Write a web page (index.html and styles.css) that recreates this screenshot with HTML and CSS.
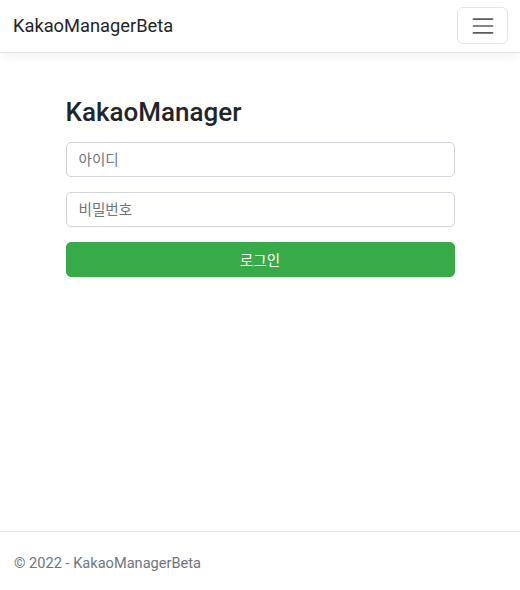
FILE: index.html
```html
<!DOCTYPE html>
<html lang="ko">
<head>
<meta charset="utf-8">
<title>KakaoManagerBeta</title>
<link rel="stylesheet" href="styles.css">
</head>
<body>
<header class="navbar">
  <div class="nav-inner">
    <a class="brand" href="#">KakaoManagerBeta</a>
    <button class="toggler" type="button" aria-label="Toggle navigation">
      <svg class="toggler-icon" viewBox="0 0 30 30" aria-hidden="true">
        <path d="M4 7h22M4 15h22M4 23h22" stroke="rgba(33,37,41,0.75)" stroke-width="2" stroke-linecap="round" stroke-miterlimit="10" fill="none"/>
      </svg>
    </button>
  </div>
</header>
<main class="main">
  <form class="login">
    <h2 class="title">KakaoManager</h2>
    <input class="field" type="text" placeholder="아이디">
    <input class="field" type="password" placeholder="비밀번호">
    <button class="btn-login" type="button">로그인</button>
  </form>
</main>
<footer class="footer">
  <div class="footer-inner">© 2022 - KakaoManagerBeta</div>
</footer>
</body>
</html>
```

FILE: styles.css
```css
* { box-sizing: border-box; }
html { font-size: 14px; }
body {
  margin: 0;
  min-height: 100vh;
  display: flex;
  flex-direction: column;
  font-family: Roboto, "Noto Sans CJK KR", "Liberation Sans", sans-serif;
  font-size: 14.6px;
  line-height: 1.5;
  color: #212529;
  background: #fff;
}
.navbar {
  border-bottom: 1px solid #dee2e6;
  box-shadow: 0 0.25rem 0.75rem rgba(0,0,0,0.05);
  padding: 7px 0 8px;
  background: #fff;
}
.nav-inner {
  display: flex;
  align-items: center;
  justify-content: space-between;
  padding: 0 12px 0 13px;
}
.brand {
  font-size: 18.3px;
  color: #212529;
  text-decoration: none;
  line-height: 1.5;
  padding: 4px 0;
}
.toggler {
  display: flex;
  align-items: center;
  justify-content: center;
  width: 51px;
  height: 37px;
  padding: 0;
  background: transparent;
  border: 1px solid rgba(0,0,0,0.1);
  border-radius: 6px;
}
.toggler-icon { width: 26px; height: 26px; display: block; }
.main {
  flex: 1;
  display: flex;
  justify-content: center;
  padding-top: 44px;
}
.login {
  width: 389px;
  display: flex;
  flex-direction: column;
}
.title {
  margin: 0 0 14px;
  font-size: 26px;
  font-weight: 500;
  line-height: 1.2;
}
.field {
  display: block;
  width: 100%;
  height: 35px;
  margin-bottom: 15px;
  padding: 5px 12px;
  font-family: inherit;
  font-size: 14.6px;
  color: #212529;
  border: 1px solid #ced4da;
  border-radius: 5px;
  background: #fff;
}
.field::placeholder { color: #6c757d; opacity: 1; }
.btn-login {
  height: 35px;
  width: 100%;
  font-family: inherit;
  font-size: 14.6px;
  color: #fff;
  background: #37ab47;
  border: 1px solid #37ab47;
  border-radius: 5px;
}
.footer {
  border-top: 1px solid #dee2e6;
  color: #6c757d;
  height: 59px;
  line-height: 62px;
  white-space: nowrap;
}
.footer-inner { padding: 0 14px; }
```
